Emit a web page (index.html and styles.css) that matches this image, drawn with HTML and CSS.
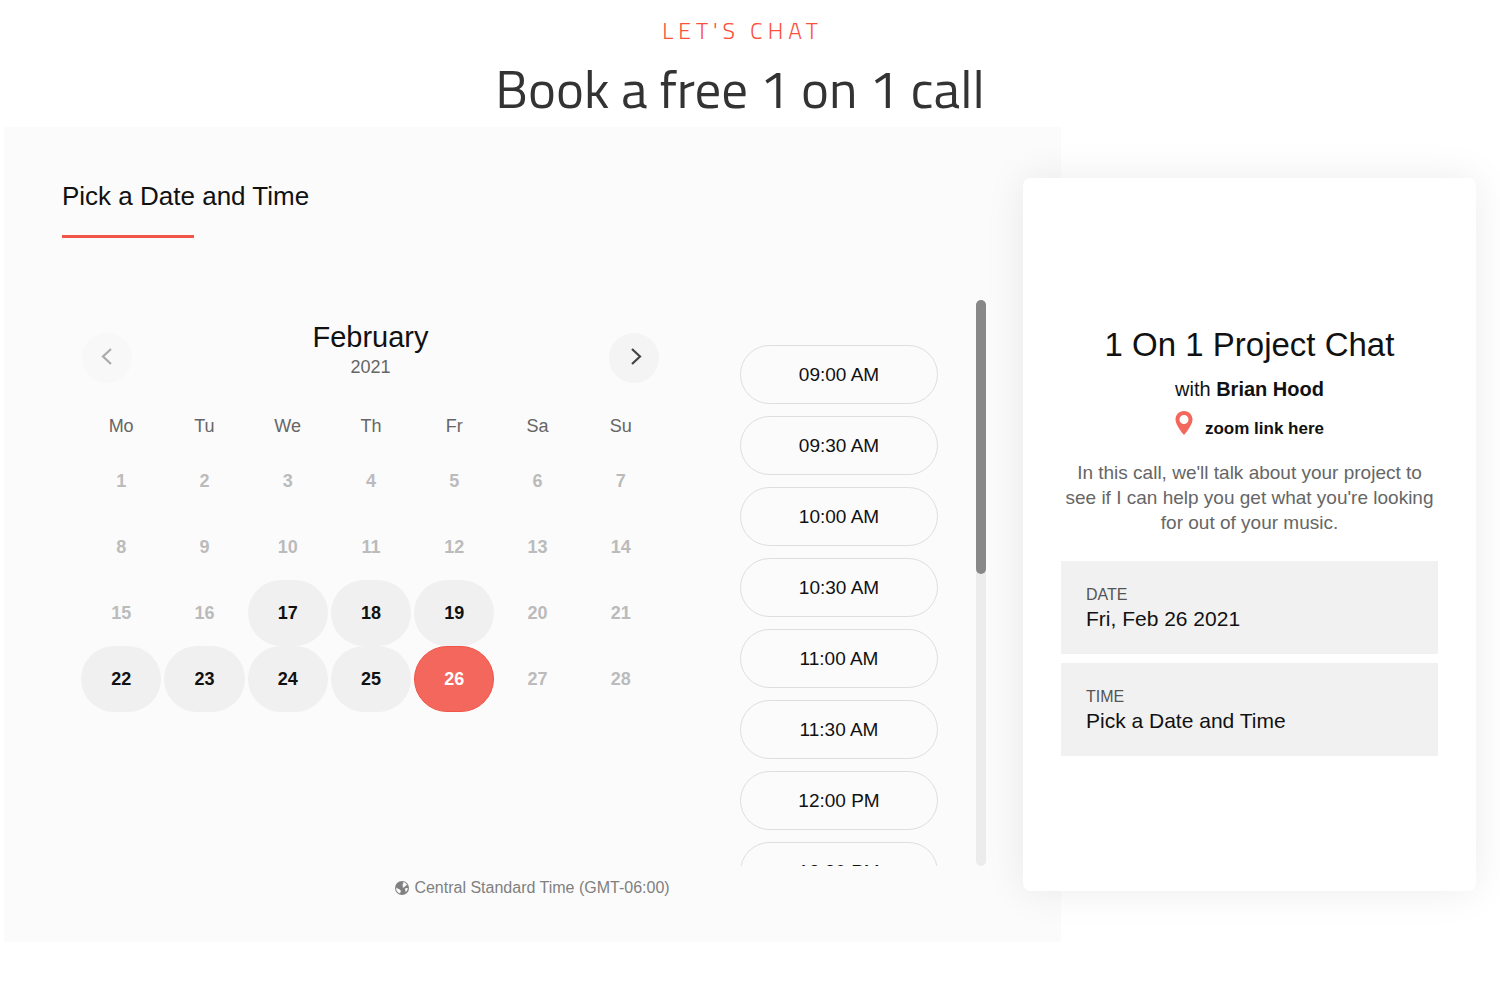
FILE: index.html
```html
<!DOCTYPE html>
<html lang="en">
<head>
  <meta charset="UTF-8" />
  <meta name="viewport" content="width=device-width, initial-scale=1.0"/>
  <title>Book a free 1 on 1 call</title>
  <link rel="stylesheet" href="styles.css">
</head>
<body>
  <header class="header">
    <p class="eyebrow">LET'S CHAT</p>
    <h1>Book a free 1 on 1 call</h1>
  </header>

  <main class="booking">
    <section class="panel">
      <h2 class="panel-title">Pick a Date and Time</h2>

      <div class="schedule">
        <div class="calendar">
          <div class="calendar-header">
            <button class="nav-button" aria-label="Previous month" disabled>
              <svg width="24" height="24" viewBox="0 0 24 24" fill="none">
                <path d="M16 3L8 10.500L16 18" stroke="currentColor" stroke-width="2.200"/>
              </svg>
            </button>
            <div class="month">
              <div class="month-name">February</div>
              <div class="year">2021</div>
            </div>
            <button class="nav-button" aria-label="Next month">
              <svg width="24" height="24" viewBox="0 0 24 24" fill="none">
                <path d="M10 3L18 10.500L10 18" stroke="currentColor" stroke-width="2.200"/>
              </svg>
            </button>
          </div>

          <table class="days">
            <thead>
              <tr><th>Mo</th><th>Tu</th><th>We</th><th>Th</th><th>Fr</th><th>Sa</th><th>Su</th></tr>
            </thead>
            <tbody>
              <tr>
                <td><button class="day" disabled>1</button></td>
                <td><button class="day" disabled>2</button></td>
                <td><button class="day" disabled>3</button></td>
                <td><button class="day" disabled>4</button></td>
                <td><button class="day" disabled>5</button></td>
                <td><button class="day" disabled>6</button></td>
                <td><button class="day" disabled>7</button></td>
              </tr>
              <tr>
                <td><button class="day" disabled>8</button></td>
                <td><button class="day" disabled>9</button></td>
                <td><button class="day" disabled>10</button></td>
                <td><button class="day" disabled>11</button></td>
                <td><button class="day" disabled>12</button></td>
                <td><button class="day" disabled>13</button></td>
                <td><button class="day" disabled>14</button></td>
              </tr>
              <tr>
                <td><button class="day" disabled>15</button></td>
                <td><button class="day" disabled>16</button></td>
                <td><button class="day">17</button></td>
                <td><button class="day">18</button></td>
                <td><button class="day">19</button></td>
                <td><button class="day" disabled>20</button></td>
                <td><button class="day" disabled>21</button></td>
              </tr>
              <tr>
                <td><button class="day">22</button></td>
                <td><button class="day">23</button></td>
                <td><button class="day">24</button></td>
                <td><button class="day">25</button></td>
                <td><button class="day selected" aria-pressed="true">26</button></td>
                <td><button class="day" disabled>27</button></td>
                <td><button class="day" disabled>28</button></td>
              </tr>
            </tbody>
          </table>
        </div>

        <div class="slots">
          <div class="slot-list">
            <button class="slot">09:00 AM</button>
            <button class="slot">09:30 AM</button>
            <button class="slot">10:00 AM</button>
            <button class="slot">10:30 AM</button>
            <button class="slot">11:00 AM</button>
            <button class="slot">11:30 AM</button>
            <button class="slot">12:00 PM</button>
            <button class="slot">12:30 PM</button>
          </div>
          <div class="scroll-track"><div class="scroll-thumb"></div></div>
        </div>
      </div>

      <div class="timezone">
        <!-- Globe Icon -->
        <svg width="14" height="14" viewBox="0 0 14 14">
          <circle cx="7" cy="7" r="7" fill="currentColor"/>
          <path d="M7.600 1.500L9.300 1.300L11 2.400L12.400 4.300L11.200 4.300L10 5.500L8.800 6.600L7.400 6.200L8.200 4.800L7 4L8.400 2.900Z M10 7.600L11.800 7L12.900 7.200L12.100 9.500L10.800 10.900L10.200 9.200Z M1 6.400L2.600 7.600L4.800 8.600L6 9.900L5.300 11.300L5.200 12.600L3 11.400L1.500 9.400Z" fill="#fbfbfb"/>
        </svg>
        <span>Central Standard Time (GMT-06:00)</span>
      </div>
    </section>

    <aside class="card">
      <h2 class="card-title">1 On 1 Project Chat</h2>
      <p class="host">with <strong>Brian Hood</strong></p>
      <p class="location">
        <!-- Pin Icon -->
        <svg width="18" height="24" viewBox="0 0 18 24">
          <path fill="#f4675c" fill-rule="evenodd" d="M9 0C4 0 0.500 3.700 0.500 8.500C0.500 14.500 9 24 9 24S17.500 14.500 17.500 8.500C17.500 3.700 14 0 9 0ZM9 4A4.500 4.500 0 1 1 9 13A4.500 4.500 0 1 1 9 4Z"/>
        </svg>
        <strong>zoom link here</strong>
      </p>
      <p class="description">In this call, we'll talk about your project to see if I can help you get what you're looking for out of your music.</p>

      <div class="summary">
        <div class="summary-label">DATE</div>
        <div class="summary-value">Fri, Feb 26 2021</div>
      </div>
      <div class="summary">
        <div class="summary-label">TIME</div>
        <div class="summary-value">Pick a Date and Time</div>
      </div>
    </aside>
  </main>
</body>
</html>
```
FILE: styles.css
```css
* {
    margin: 0;
    padding: 0;
    box-sizing: border-box;
}

body {
    padding: 0 24px 0 4px;
    background-color: #fff;
    color: #111;
    font-family: Arial, "Liberation Sans", sans-serif;
}

button {
    border: none;
    background: none;
    color: inherit;
    font-family: inherit;
    cursor: pointer;
}

.header {
    padding-top: 15px;
    text-align: center;
    font-family: "Titillium Web", Roboto, sans-serif;
}

.eyebrow {
    padding-left: 5px;
    color: #fb503e;
    font-size: 23px;
    font-weight: 300;
    line-height: 32px;
    letter-spacing: 5px;
}

.header h1 {
    padding-top: 4px;
    color: #333;
    font-size: 53px;
    font-weight: 400;
    line-height: 76px;
}

.booking {
    display: flex;
    align-items: flex-start;
}

.panel {
    flex: 1;
    padding: 51px 75px 42px 58px;
    background-color: #fbfbfb;
}

.panel-title {
    width: fit-content;
    font-size: 26px;
    font-weight: 400;
    line-height: 36px;
}

.panel-title::after {
    content: "";
    display: block;
    width: 132px;
    height: 3px;
    margin-top: 21px;
    background-color: #f05548;
}

.schedule {
    display: flex;
    justify-content: space-between;
    gap: 76px;
    height: 566px;
    margin-top: 62px;
    padding-left: 16px;
}

/* Calendar */
.calendar {
    flex: 1;
    padding-top: 20px;
}

.calendar-header {
    display: flex;
    justify-content: space-between;
    padding: 0 5px 0 4px;
}

.nav-button {
    display: flex;
    align-items: center;
    justify-content: center;
    width: 50px;
    height: 50px;
    margin-top: 13px;
    border-radius: 50%;
    background-color: #f4f4f4;
    color: #444;
}

.nav-button:disabled {
    background-color: #f8f8f8;
    color: #aaa;
    cursor: default;
}

.month {
    text-align: center;
}

.month-name {
    font-size: 29px;
    line-height: 34px;
}

.year {
    color: #666;
    font-size: 18px;
    line-height: 26px;
}

.days {
    width: 100%;
    margin-top: 21px;
    table-layout: fixed;
    border-collapse: separate;
    border-spacing: 3px 0;
}

.days th {
    height: 44px;
    color: #666;
    font-size: 18px;
    font-weight: 400;
}

.day {
    display: block;
    width: 100%;
    height: 66px;
    border-radius: 36px;
    background-color: #f0f0f0;
    font-size: 18px;
    font-weight: 700;
}

.day:disabled {
    background: none;
    color: #bbb;
    cursor: default;
}

.day.selected {
    border: 1px solid #f05548;
    background-color: #f4675c;
    color: #fff;
}

/* Time slots */
.slots {
    display: flex;
    gap: 38px;
}

.slot-list {
    display: flex;
    flex-direction: column;
    gap: 12px;
    width: 198px;
    padding-top: 45px;
    overflow-y: auto;
    scrollbar-width: none;
}

.slot {
    flex-shrink: 0;
    height: 59px;
    border: 1px solid #dedede;
    border-radius: 30px;
    font-size: 19px;
}

.scroll-track {
    width: 10px;
    border-radius: 5px;
    background-color: #ececec;
}

.scroll-thumb {
    height: 274px;
    border-radius: 5px;
    background-color: #888;
}

.timezone {
    display: flex;
    align-items: center;
    justify-content: center;
    gap: 5px;
    margin-top: 10px;
    padding-left: 17px;
    color: #808080;
    font-size: 16px;
    line-height: 24px;
}

/* Event card */
.card {
    position: relative;
    width: 453px;
    margin: 51px 0 0 -38px;
    padding: 148px 38px 135px;
    border-radius: 8px;
    background-color: #fff;
    box-shadow: 0 0 40px rgba(0, 0, 0, 0.08);
    text-align: center;
}

.card-title {
    font-size: 33px;
    font-weight: 400;
    line-height: 38px;
}

.host {
    margin-top: 12px;
    font-size: 20px;
    line-height: 26px;
}

.location {
    display: flex;
    justify-content: center;
    gap: 12px;
    margin-top: 9px;
    font-size: 17px;
    line-height: 36px;
}

.description {
    margin-top: 13px;
    color: #666;
    font-size: 19px;
    line-height: 25px;
}

.summary {
    margin-top: 9px;
    padding: 23px 25px 22px;
    background-color: #f1f1f1;
    text-align: left;
}

.description + .summary {
    margin-top: 26px;
}

.summary-label {
    color: #555;
    font-size: 16px;
    line-height: 22px;
}

.summary-value {
    font-size: 21px;
    line-height: 26px;
}
```
